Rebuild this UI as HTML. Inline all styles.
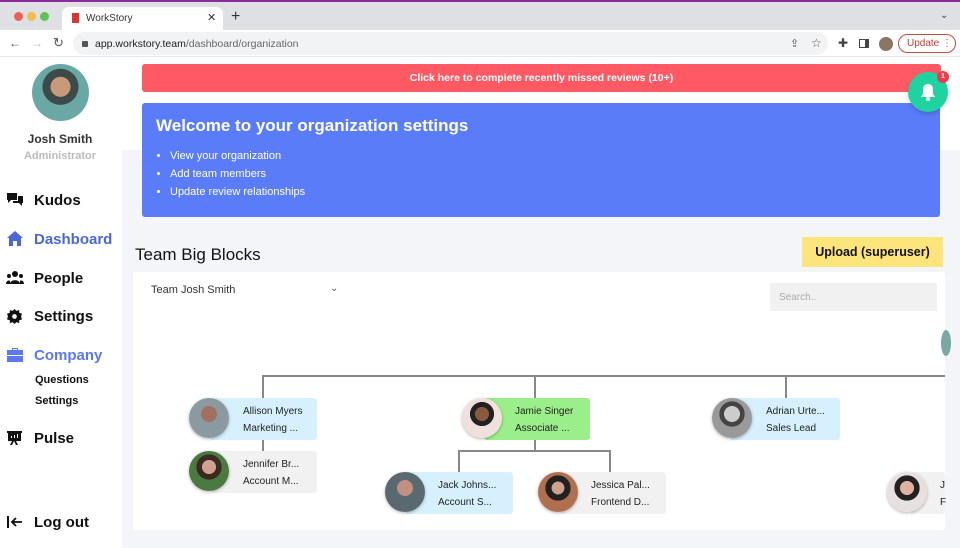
<!DOCTYPE html>
<html><head><style>
*{box-sizing:border-box;margin:0;padding:0}
body{width:960px;height:548px;overflow:hidden;font-family:"Liberation Sans",sans-serif;background:#fff;position:relative}
.a{position:absolute}
.card{position:absolute;height:42px;border-radius:3px;font-size:10px;color:#222}
.card .t1{position:absolute;left:53px;top:8px;white-space:nowrap}
.card .t2{position:absolute;left:53px;top:25px;white-space:nowrap}
.av{position:absolute;width:40px;height:40px;border-radius:50%;box-shadow:0 1px 3px rgba(0,0,0,.3)}
.ln{position:absolute;background:#888}
.nav{position:absolute;left:34px;font-size:15px;font-weight:bold;color:#111}
svg.i{position:absolute}
</style></head><body>
<!-- browser chrome -->
<div class="a" style="left:0;top:0;width:960px;height:2px;background:#8a2b9a"></div>
<div class="a" style="left:0;top:2px;width:960px;height:28px;background:#dfe0e4"></div>
<div class="a" style="left:14px;top:12px;width:9px;height:9px;border-radius:50%;background:#ed5f57"></div>
<div class="a" style="left:27px;top:12px;width:9px;height:9px;border-radius:50%;background:#f5bd4f"></div>
<div class="a" style="left:40px;top:12px;width:9px;height:9px;border-radius:50%;background:#5fc455"></div>
<div class="a" style="left:62px;top:7px;width:161px;height:23px;background:#fff;border-radius:7px 7px 0 0"></div>
<div class="a" style="left:72px;top:13px;width:7px;height:10px;background:#d33"></div>
<div class="a" style="left:86px;top:13px;font-size:10px;color:#333">WorkStory</div>
<div class="a" style="left:207px;top:11px;font-size:11px;color:#333">✕</div>
<div class="a" style="left:231px;top:8px;font-size:16px;color:#333">+</div>
<div class="a" style="left:940px;top:10px;font-size:10px;color:#444">⌄</div>
<div class="a" style="left:0;top:30px;width:960px;height:27px;background:#fff;border-bottom:1px solid #e5e5e5"></div>
<div class="a" style="left:9px;top:36px;font-size:12px;color:#555">←</div>
<div class="a" style="left:31px;top:36px;font-size:12px;color:#bbb">→</div>
<div class="a" style="left:53px;top:35px;font-size:13px;color:#555">↻</div>
<div class="a" style="left:73px;top:32px;width:755px;height:23px;background:#f1f3f4;border-radius:12px"></div>
<div class="a" style="left:82px;top:41px;width:6px;height:6px;background:#555;border-radius:1px"></div>
<div class="a" style="left:95px;top:38px;font-size:10.5px;color:#222">app.workstory.team<span style="color:#666">/dashboard/organization</span></div>
<div class="a" style="left:790px;top:37px;font-size:11px;color:#555">⇪</div>
<div class="a" style="left:811px;top:36px;font-size:12px;color:#555">☆</div>
<div class="a" style="left:838px;top:36px;font-size:12px;color:#444">✚</div>
<div class="a" style="left:859px;top:39px;width:10px;height:9px;border:1.5px solid #444;border-right-width:4px"></div>
<div class="a" style="left:879px;top:37px;width:14px;height:14px;border-radius:50%;background:#8a7665"></div>
<div class="a" style="left:898px;top:34px;width:58px;height:19px;border:1px solid #c94a42;border-radius:10px;font-size:10px;color:#c43a32;padding:3px 0 0 8px">Update ⋮</div>
<!-- main bg -->
<div class="a" style="left:122px;top:150px;width:838px;height:398px;background:#f3f5f9"></div>
<!-- sidebar -->
<div class="a" style="left:32px;top:64px;width:57px;height:57px;border-radius:50%;background:radial-gradient(circle at 50% 40%,#c89a7a 0 22%,#3c4a4a 23% 40%,#6aa8a6 41%)"></div>
<div class="a" style="left:0;top:132px;width:120px;text-align:center;font-size:12px;font-weight:bold;color:#333">Josh Smith</div>
<div class="a" style="left:0;top:150px;width:120px;text-align:center;font-size:11px;font-weight:bold;color:#bbb">Administrator</div>
<svg class="i" style="left:6px;top:192px" width="18" height="15" viewBox="0 0 18 15"><path d="M1 1h10v7H5l-3 3V8H1z" fill="#111"/><path d="M12 4h5v7h-1v3l-3-3H7V9h5z" fill="#111"/></svg>
<div class="nav" style="top:192px">Kudos</div>
<svg class="i" style="left:7px;top:231px" width="16" height="15" viewBox="0 0 16 15"><path d="M8 0L0 7h2v8h4v-5h4v5h4V7h2z" fill="#4b66d6"/></svg>
<div class="nav" style="top:231px;color:#4b66d6">Dashboard</div>
<svg class="i" style="left:6px;top:270px" width="18" height="15" viewBox="0 0 18 15"><circle cx="9" cy="4" r="3" fill="#111"/><circle cx="3" cy="6" r="2" fill="#111"/><circle cx="15" cy="6" r="2" fill="#111"/><path d="M4 14c0-5 10-5 10 0z M0 14c0-4 4-4 4-3v3z M14 11c0-1 4-1 4 3h-4z" fill="#111"/></svg>
<div class="nav" style="top:270px">People</div>
<svg class="i" style="left:7px;top:309px" width="15" height="15" viewBox="0 0 16 16"><path d="M8 0l2 2 3-1 0 3 3 1-1 3 1 3-3 1 0 3-3-1-2 2-2-2-3 1 0-3-3-1 1-3-1-3 3-1 0-3 3 1z" fill="#111"/><circle cx="8" cy="8" r="2.5" fill="#fff"/></svg>
<div class="nav" style="top:308px">Settings</div>
<svg class="i" style="left:7px;top:347px" width="16" height="15" viewBox="0 0 16 15"><path d="M5 3V1h6v2h5v5H0V3z M6 2v1h4V2z M0 9h16v6H0z" fill="#5b78f0"/></svg>
<div class="nav" style="top:347px;color:#5b78f0">Company</div>
<div class="a" style="left:35px;top:374px;font-size:11px;font-weight:bold;color:#111">Questions</div>
<div class="a" style="left:35px;top:395px;font-size:11px;font-weight:bold;color:#111">Settings</div>
<svg class="i" style="left:7px;top:431px" width="15" height="14" viewBox="0 0 15 14"><path d="M0 0h15v2h-1v8H9l2 4H9l-2-4-2 4H3l2-4H1V2H0z" fill="#111"/><path d="M4 7V5h1v2zM7 7V4h1v3zM10 7V3h1v4z" fill="#fff"/></svg>
<div class="nav" style="top:430px">Pulse</div>
<svg class="i" style="left:7px;top:516px" width="16" height="12" viewBox="0 0 16 12"><path d="M1 0v12" stroke="#111" stroke-width="2"/><path d="M15 6H5M9 2L5 6l4 4" stroke="#111" stroke-width="1.8" fill="none"/></svg>
<div class="nav" style="top:514px">Log out</div>
<!-- banner -->
<div class="a" style="left:142px;top:64px;width:799px;height:28px;background:#ff5a64;border-radius:3px;color:#fff;font-size:10.5px;font-weight:bold;text-align:center;line-height:28px">Click here to complete recently missed reviews (10+)</div>
<div class="a" style="left:142px;top:103px;width:798px;height:114px;background:#5a7cf8;border-radius:3px;color:#fff">
<div style="position:absolute;left:14px;top:13px;font-size:17px;font-weight:bold">Welcome to your organization settings</div>
<ul style="position:absolute;left:28px;top:44px;font-size:11px;line-height:18px">
<li>View your organization</li><li>Add team members</li><li>Update review relationships</li></ul></div>
<div class="a" style="left:908px;top:72px;width:40px;height:40px;border-radius:50%;background:#1fd3a0;box-shadow:0 2px 4px rgba(0,0,0,.2)"></div>
<svg class="i" style="left:920px;top:83px" width="16" height="18" viewBox="0 0 16 18"><path d="M8 1c-3 0-5 2-5 5v5l-2 3h14l-2-3V6c0-3-2-5-5-5z" fill="#fff"/><circle cx="8" cy="16" r="2" fill="#fff"/></svg>
<div class="a" style="left:937px;top:71px;width:12px;height:12px;border-radius:50%;background:#f03a4a;color:#fff;font-size:7px;text-align:center;line-height:12px;font-weight:bold">1</div>
<!-- team -->
<div class="a" style="left:135px;top:245px;font-size:17px;color:#111">Team Big Blocks</div>
<div class="a" style="left:802px;top:237px;width:141px;height:30px;background:#fde57b;font-size:12.5px;font-weight:bold;text-align:center;line-height:30px;color:#111">Upload (superuser)</div>
<div class="a" style="left:133px;top:272px;width:812px;height:258px;background:#fff;border-radius:3px"></div>
<div class="a" style="left:151px;top:284px;font-size:11px;color:#333">Team Josh Smith</div>
<div class="a" style="left:330px;top:283px;font-size:10px;color:#555">⌄</div>
<div class="a" style="left:770px;top:283px;width:167px;height:28px;background:#f1f1f1;font-size:10px;color:#aaa;padding:9px 0 0 9px">Search..</div>
<div class="a" style="left:941px;top:330px;width:10px;height:26px;border-radius:50%;background:#7aa8a4"></div>
<!-- lines -->
<div class="ln" style="left:262px;top:375px;width:683px;height:1.5px"></div>
<div class="ln" style="left:262px;top:375px;width:1.5px;height:23px"></div>
<div class="ln" style="left:534px;top:375px;width:1.5px;height:23px"></div>
<div class="ln" style="left:785px;top:375px;width:1.5px;height:23px"></div>
<div class="ln" style="left:262px;top:439px;width:1.5px;height:12px"></div>
<div class="ln" style="left:534px;top:439px;width:1.5px;height:11px"></div>
<div class="ln" style="left:458px;top:450px;width:152px;height:1.5px"></div>
<div class="ln" style="left:458px;top:450px;width:1.5px;height:22px"></div>
<div class="ln" style="left:609px;top:450px;width:1.5px;height:22px"></div>
<!-- cards -->
<div class="card" style="left:210px;top:398px;width:107px;background:#d6f1fd"><div class="t1" style="left:33px">Allison Myers</div><div class="t2" style="left:33px">Marketing ...</div></div>
<div class="av" style="left:189px;top:398px;background:radial-gradient(circle at 50% 40%,#a07060 0 25%,#8a9aa0 26%)"></div>
<div class="card" style="left:210px;top:451px;width:107px;background:#f1f1f1"><div class="t1" style="left:33px">Jennifer Br...</div><div class="t2" style="left:33px">Account M...</div></div>
<div class="av" style="left:189px;top:451px;background:radial-gradient(circle at 50% 40%,#d0a090 0 22%,#3a2a20 23% 40%,#4a7a40 41%)"></div>
<div class="card" style="left:484px;top:398px;width:106px;background:#9bef8a"><div class="t1" style="left:31px">Jamie Singer</div><div class="t2" style="left:31px">Associate ...</div></div>
<div class="av" style="left:462px;top:398px;background:radial-gradient(circle at 50% 40%,#8a5a40 0 22%,#222 23% 38%,#f0e0dc 39%)"></div>
<div class="card" style="left:730px;top:398px;width:110px;background:#d6f1fd"><div class="t1" style="left:36px">Adrian Urte...</div><div class="t2" style="left:36px">Sales Lead</div></div>
<div class="av" style="left:712px;top:398px;background:radial-gradient(circle at 50% 40%,#ccc 0 25%,#444 26% 40%,#999 41%)"></div>
<div class="card" style="left:405px;top:472px;width:108px;background:#d6f1fd"><div class="t1" style="left:33px">Jack Johns...</div><div class="t2" style="left:33px">Account S...</div></div>
<div class="av" style="left:385px;top:472px;background:radial-gradient(circle at 50% 40%,#c09080 0 25%,#5a6870 26%)"></div>
<div class="card" style="left:560px;top:472px;width:106px;background:#f1f1f1"><div class="t1" style="left:31px">Jessica Pal...</div><div class="t2" style="left:31px">Frontend D...</div></div>
<div class="av" style="left:538px;top:472px;background:radial-gradient(circle at 50% 40%,#d0a090 0 20%,#222 21% 40%,#b07050 41%)"></div>
<div class="card" style="left:910px;top:472px;width:35px;background:#f1f1f1"><div class="t1" style="left:30px">J</div><div class="t2" style="left:30px">F</div></div>
<div class="av" style="left:887px;top:472px;background:radial-gradient(circle at 50% 40%,#e0b0a0 0 22%,#222 23% 40%,#e8e0e0 41%)"></div>
</body></html>
